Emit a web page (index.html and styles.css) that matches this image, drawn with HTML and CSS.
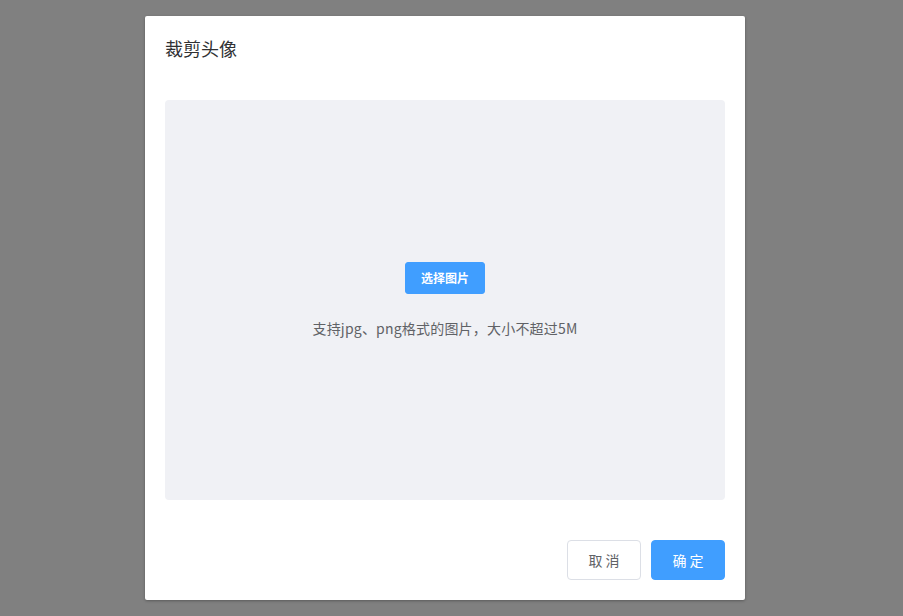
FILE: index.html
```html
<!DOCTYPE html>
<html lang="zh-CN">
<head>
<meta charset="utf-8">
<title>裁剪头像</title>
<link rel="stylesheet" href="styles.css">
</head>
<body>
<div class="overlay">
  <div class="dialog">
    <div class="dialog-header">
      <span class="dialog-title">裁剪头像</span>
    </div>
    <div class="dialog-body">
      <div class="upload-area">
        <button class="btn btn-primary btn-small">选择图片</button>
        <p class="upload-tip">支持jpg、png格式的图片，大小不超过5M</p>
      </div>
    </div>
    <div class="dialog-footer">
      <button class="btn btn-default">取 消</button>
      <button class="btn btn-primary">确 定</button>
    </div>
  </div>
</div>
</body>
</html>
```

FILE: styles.css
```css
* { box-sizing: border-box; }
html, body {
  margin: 0;
  padding: 0;
  height: 100%;
}
body {
  font-family: "Noto Sans CJK SC", "Noto Sans", "Liberation Sans", sans-serif;
  background: #808080;
}
.overlay {
  min-height: 100%;
  display: flex;
  justify-content: flex-start;
  padding: 16px 0 0 145px;
}
.dialog {
  width: 600px;
  height: 584px;
  background: #fff;
  border-radius: 2px;
  box-shadow: 0 1px 3px rgba(0, 0, 0, 0.3);
  display: flex;
  flex-direction: column;
}
.dialog-header {
  padding: 20px 20px 10px;
}
.dialog-title {
  display: block;
  font-size: 18px;
  line-height: 24px;
  color: #303133;
}
.dialog-body {
  padding: 30px 20px;
}
.upload-area {
  height: 400px;
  background: #f0f1f5;
  border-radius: 4px;
  display: flex;
  flex-direction: column;
  align-items: center;
  justify-content: center;
}
.upload-tip {
  margin: 24px 0 0;
  font-size: 14px;
  line-height: 20px;
  color: #606266;
  letter-spacing: 0.2px;
}
.dialog-footer {
  padding: 10px 20px 20px;
  display: flex;
  justify-content: flex-end;
  gap: 10px;
}
.btn {
  font-family: inherit;
  font-size: 14px;
  line-height: 14px;
  height: 40px;
  padding: 0 20px;
  border-radius: 4px;
  border: 1px solid #dcdfe6;
  background: #fff;
  color: #606266;
  cursor: pointer;
  white-space: nowrap;
  width: 74px;
  font-weight: 400;
}
.btn-primary {
  background: #409eff;
  border-color: #409eff;
  color: #fff;
}
.btn-small {
  width: 80px;
  height: 32px;
  font-size: 12px;
  line-height: 12px;
  padding: 0 15px;
  border-radius: 3px;
  font-weight: 600;
}
```
